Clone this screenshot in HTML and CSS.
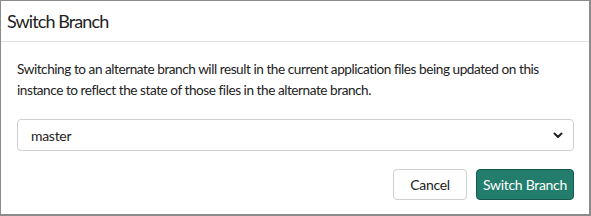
FILE: index.html
```html
<!DOCTYPE html>
<html>
<head>
<meta charset="utf-8">
<link rel="stylesheet" href="styles.css">
</head>
<body>
<div class="modal">
  <div class="modal-header">
    <h4 class="modal-title">Switch Branch</h4>
  </div>
  <div class="modal-body">
    <p class="desc">Switching to an alternate branch will result in the current application files being updated on this<br>instance to reflect the state of those files in the alternate branch.</p>
    <div class="select">
      <span class="select-value">master</span>
      <svg class="chevron" width="10" height="7" viewBox="0 0 10 7"><path d="M1.5 1.5 L5 5 L8.5 1.5" fill="none" stroke="#222" stroke-width="2" stroke-linecap="round" stroke-linejoin="round"/></svg>
    </div>
  </div>
  <div class="modal-footer">
    <button class="btn btn-default">Cancel</button>
    <button class="btn btn-primary">Switch Branch</button>
  </div>
</div>
</body>
</html>
```
FILE: styles.css
```css
html, body { margin: 0; padding: 0; background: #fff; }
body { font-family: Lato, "Open Sans", sans-serif; color: #222; }
.modal {
  width: 591px; height: 216px; box-sizing: border-box;
  border-style: solid; border-color: #8c8c8c;
  border-width: 1px 2px 2px 1px;
  display: flex; flex-direction: column;
}
.modal-header {
  height: 41px; box-sizing: border-box;
  border-bottom: 1px solid #e3e3e3;
  padding: 0 6px; display: flex; align-items: center;
}
.modal-title { margin: 0; font-size: 18px; letter-spacing: -0.9px; font-weight: 400; color: #222; }
.modal-body { padding: 17px 15px 0 16px; }
.desc { margin: 0; font-size: 13.6px; letter-spacing: -0.45px; line-height: 21px; color: #222; white-space: nowrap; }
.select {
  margin-top: 18px; height: 32px; box-sizing: border-box;
  border: 1px solid #cfcfcf; border-radius: 4px;
  display: flex; align-items: center; justify-content: space-between;
  padding: 0 10px 0 13px; font-size: 14px; letter-spacing: -0.3px;
}
.modal-footer {
  display: flex; justify-content: flex-end; gap: 9px;
  padding: 18px 15px 0 0;
}
.btn {
  height: 31px; box-sizing: border-box; border-radius: 4px; white-space: nowrap;
  font-family: inherit; font-size: 14px; letter-spacing: -0.3px; padding: 0; cursor: pointer;
}
.btn-default { background: #fff; border: 1px solid #cfcfcf; color: #222; width: 74px; }
.btn-primary { background: #237d6d; border: 1px solid #17584c; color: #fff; width: 98px; }
```
